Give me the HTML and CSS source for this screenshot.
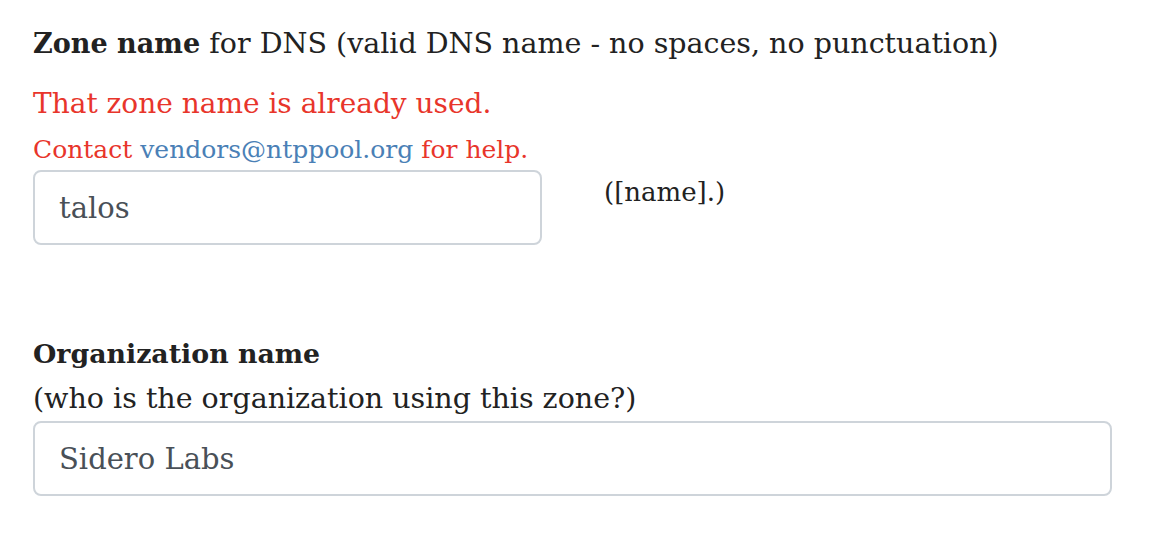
FILE: index.html
```html
<!DOCTYPE html>
<html>
<head>
<meta charset="utf-8">
<link rel="stylesheet" href="styles.css">
</head>
<body>
<form class="form">
  <div class="field">
    <label class="label"><strong>Zone name</strong> for DNS (valid DNS name - no spaces, no punctuation)</label>
    <div class="error">That zone name is already used.</div>
    <div class="help">Contact <a href="#" class="link">vendors@ntppool.org</a> for help.</div>
    <div class="row">
      <input class="input input-short" type="text" value="talos">
      <span class="suffix">([name].)</span>
    </div>
  </div>
  <div class="field field-org">
    <label class="label label-org"><strong>Organization name</strong><br>(who is the organization using this zone?)</label>
    <input class="input input-wide" type="text" value="Sidero Labs">
  </div>
</form>
</body>
</html>
```

FILE: styles.css
```css
html, body {
  margin: 0;
  padding: 0;
  background: #ffffff;
}
body {
  font-family: "DejaVu Serif", "Liberation Serif", serif;
  color: #222222;
  font-size: 28.5px;
}
.form {
  padding: 24px 0 0 33px;
}
.label {
  display: block;
  line-height: 40px;
  color: #222222;
}
.label strong {
  font-weight: bold;
  font-size: 0.95em;
}
.error {
  color: #e8352b;
  font-size: 28px;
  margin-top: 20px;
  line-height: 40px;
}
.help {
  color: #e8352b;
  font-size: 25px;
  line-height: 34px;
  margin-top: 9px;
}
.link {
  color: #4a80b6;
  text-decoration: none;
}
.row {
  display: flex;
  align-items: flex-start;
  gap: 62px;
  margin-top: 3px;
}
.input {
  box-sizing: border-box;
  height: 75px;
  border: 2px solid #ced4da;
  border-radius: 8px;
  padding: 0 24px;
  font-family: "DejaVu Serif", "Liberation Serif", serif;
  font-size: 29px;
  color: #495057;
  background: #fff;
  outline: none;
}
.input-short {
  width: 509px;
}
.input-wide {
  width: 1079px;
  display: block;
}
.suffix {
  font-size: 26px;
  line-height: 40px;
  padding-top: 2px;
}
.field-org {
  margin-top: 86px;
}
.label-org {
  line-height: 45px;
}
.label-org strong {
  font-size: 0.94em;
}
```
